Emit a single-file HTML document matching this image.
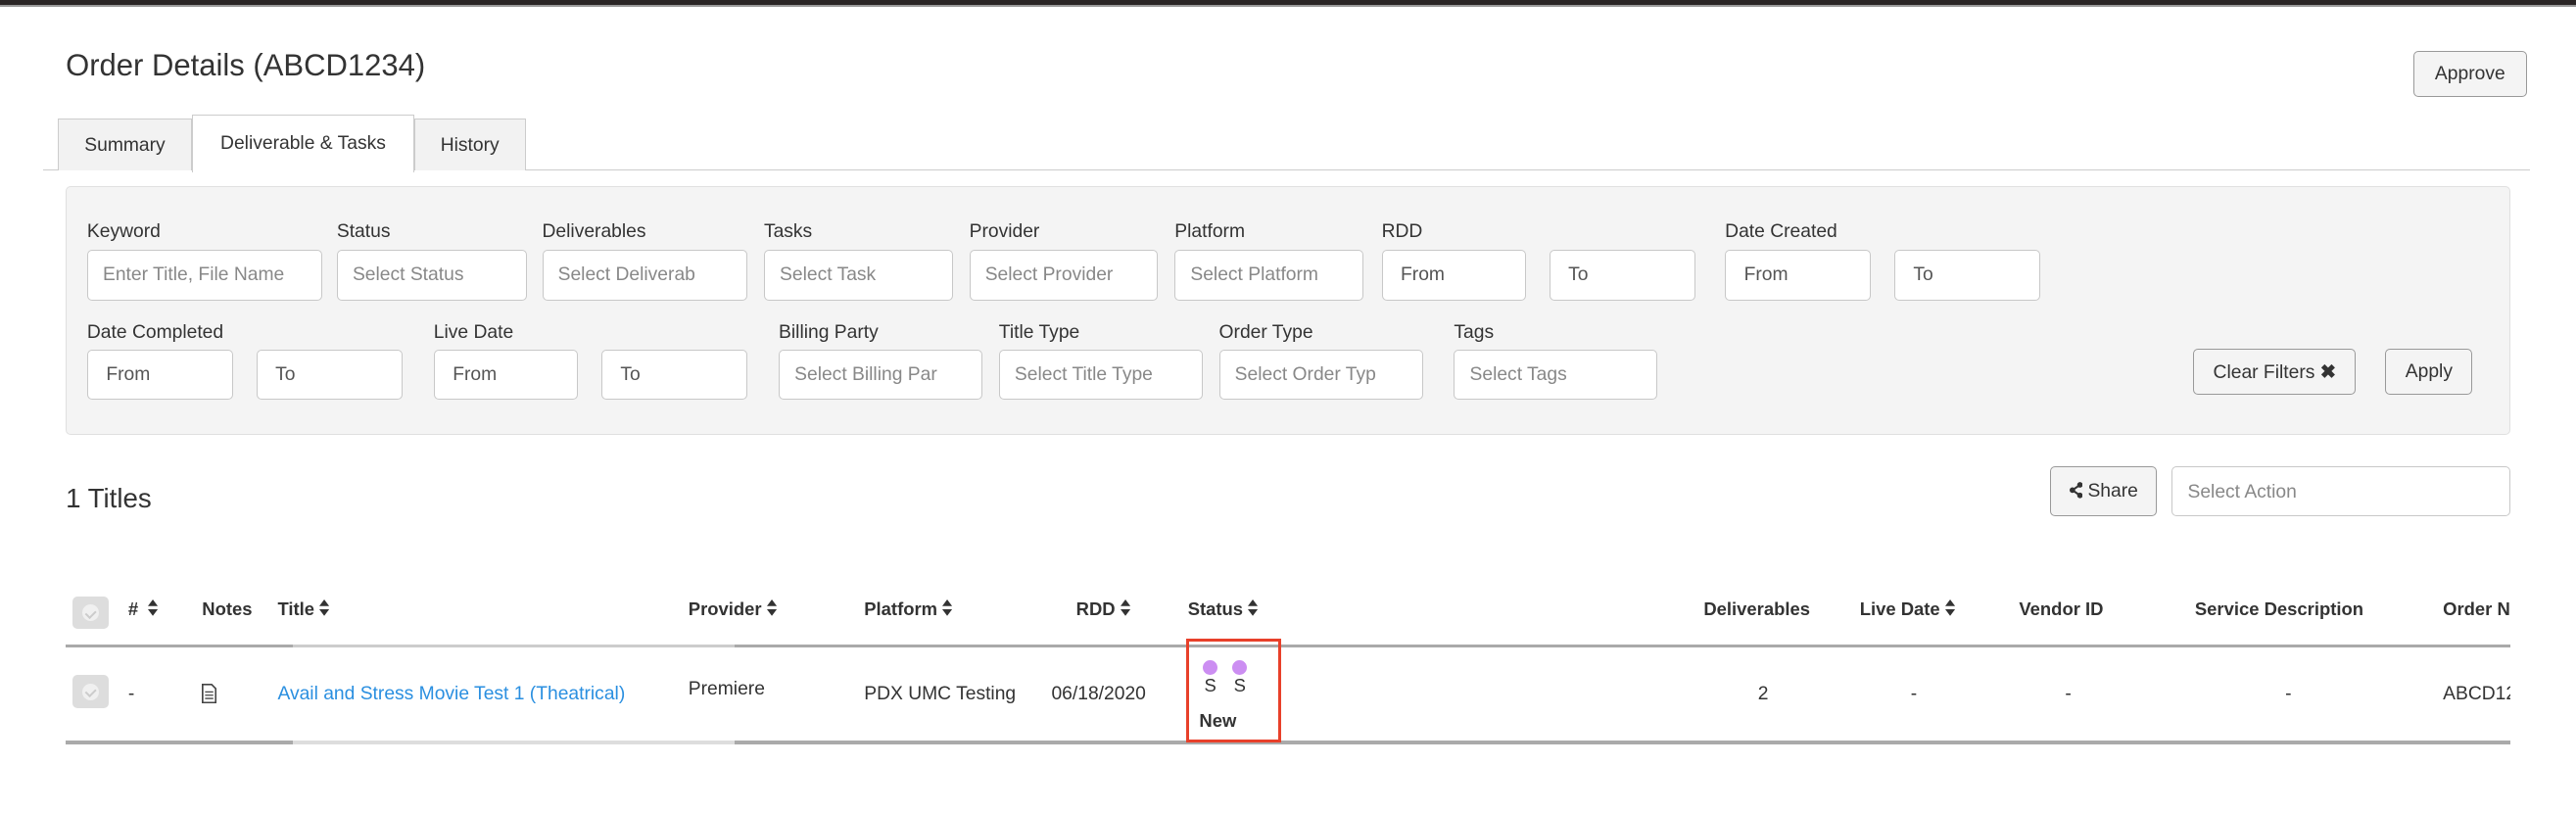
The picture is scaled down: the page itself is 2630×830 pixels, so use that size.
<!DOCTYPE html>
<html><head><meta charset="utf-8">
<style>
html,body{margin:0;padding:0;background:#fff;overflow:hidden}
body{width:2630px;height:830px}
#w{position:relative;width:1568px;height:495px;zoom:1.6773;font-family:"Liberation Sans",sans-serif;color:#333}
.a{position:absolute;white-space:nowrap}
.lbl{font-size:11.5px;color:#333}
.in{position:absolute;background:#fff;border:1px solid #c8c8c8;border-radius:3px;box-sizing:border-box;font-size:11.5px;color:#888;padding-left:9px;line-height:30px;overflow:hidden;white-space:nowrap}
.btn{position:absolute;background:#f4f4f4;border:1px solid #999;border-radius:3px;box-sizing:border-box;font-size:11.5px;color:#333;text-align:center}
.th{position:absolute;font-size:11px;font-weight:bold;color:#333;white-space:nowrap}
.td{position:absolute;font-size:11.5px;color:#333;white-space:nowrap}
.srt{display:inline-block;width:6px;height:10px;vertical-align:-1px;margin-left:3px}
.cb{position:absolute;width:22px;height:20px;background:#ddd;border-radius:3px}
.cb:after{content:"";position:absolute;left:6px;top:5px;width:10px;height:10px;border-radius:50%;background:#f0f0f0}
.cb:before{content:"";position:absolute;left:9px;top:7px;width:3px;height:5px;border:solid #ccc;border-width:0 1.5px 1.5px 0;transform:rotate(45deg);z-index:2}
</style></head><body><div id="w">
<div class="a" style="left:0;top:0;width:1568px;height:3px;background:#2a2525"></div>
<div class="a" style="left:0;top:3px;width:1568px;height:1px;background:#999"></div>

<div class="a" style="left:40px;top:29px;font-size:18.5px;color:#333">Order Details (ABCD1234)</div>
<div class="btn" style="left:1469px;top:31px;width:69px;height:28px;line-height:28px">Approve</div>

<div class="a" style="left:26px;top:103px;width:1514px;height:1px;background:#ccc"></div>
<div class="a" style="left:35px;top:72px;width:82px;height:32px;background:#f2f2f2;border:1px solid #ccc;border-bottom:none;box-sizing:border-box;font-size:11.5px;text-align:center;line-height:32px">Summary</div>
<div class="a" style="left:117px;top:70px;width:135px;height:35px;background:#fff;border:1px solid #ccc;border-bottom:none;box-sizing:border-box;font-size:11.5px;text-align:center;line-height:35px">Deliverable &amp; Tasks</div>
<div class="a" style="left:252px;top:72px;width:68px;height:32px;background:#f2f2f2;border:1px solid #ccc;border-bottom:none;box-sizing:border-box;font-size:11.5px;text-align:center;line-height:32px">History</div>

<div class="a" style="left:40px;top:113px;width:1488px;height:152px;background:#f4f4f4;border:1px solid #e0e0e0;border-radius:3px;box-sizing:border-box"></div>

<div class="a lbl" style="left:53px;top:135px">Keyword</div>
<div class="a lbl" style="left:205px;top:135px">Status</div>
<div class="a lbl" style="left:330px;top:135px">Deliverables</div>
<div class="a lbl" style="left:465px;top:135px">Tasks</div>
<div class="a lbl" style="left:590px;top:135px">Provider</div>
<div class="a lbl" style="left:715px;top:135px">Platform</div>
<div class="a lbl" style="left:841px;top:135px">RDD</div>
<div class="a lbl" style="left:1050px;top:135px">Date Created</div>
<div class="in" style="left:53px;top:152px;width:143px;height:31px">Enter Title, File Name</div>
<div class="in" style="left:205px;top:152px;width:116px;height:31px">Select Status</div>
<div class="in" style="left:330px;top:152px;width:125px;height:31px">Select Deliverab</div>
<div class="in" style="left:465px;top:152px;width:115px;height:31px">Select Task</div>
<div class="in" style="left:590px;top:152px;width:115px;height:31px">Select Provider</div>
<div class="in" style="left:715px;top:152px;width:115px;height:31px">Select Platform</div>
<div class="in" style="left:841px;top:152px;width:88px;height:31px;color:#555;padding-left:11px">From</div>
<div class="in" style="left:943px;top:152px;width:89px;height:31px;color:#555;padding-left:11px">To</div>
<div class="in" style="left:1050px;top:152px;width:89px;height:31px;color:#555;padding-left:11px">From</div>
<div class="in" style="left:1153px;top:152px;width:89px;height:31px;color:#555;padding-left:11px">To</div>

<div class="a lbl" style="left:53px;top:196px">Date Completed</div>
<div class="a lbl" style="left:264px;top:196px">Live Date</div>
<div class="a lbl" style="left:474px;top:196px">Billing Party</div>
<div class="a lbl" style="left:608px;top:196px">Title Type</div>
<div class="a lbl" style="left:742px;top:196px">Order Type</div>
<div class="a lbl" style="left:885px;top:196px">Tags</div>
<div class="in" style="left:53px;top:213px;width:89px;height:30px;color:#555;padding-left:11px">From</div>
<div class="in" style="left:156px;top:213px;width:89px;height:30px;color:#555;padding-left:11px">To</div>
<div class="in" style="left:264px;top:213px;width:88px;height:30px;color:#555;padding-left:11px">From</div>
<div class="in" style="left:366px;top:213px;width:89px;height:30px;color:#555;padding-left:11px">To</div>
<div class="in" style="left:474px;top:213px;width:124px;height:30px">Select Billing Par</div>
<div class="in" style="left:608px;top:213px;width:124px;height:30px">Select Title Type</div>
<div class="in" style="left:742px;top:213px;width:124px;height:30px">Select Order Typ</div>
<div class="in" style="left:885px;top:213px;width:124px;height:30px">Select Tags</div>
<div class="btn" style="left:1335px;top:212px;width:99px;height:28px;line-height:29px">Clear Filters <b>&#10006;</b></div>
<div class="btn" style="left:1452px;top:212px;width:53px;height:28px;line-height:27px">Apply</div>

<div class="a" style="left:40px;top:294px;font-size:16.5px">1 Titles</div>
<div class="btn" style="left:1248px;top:284px;width:65px;height:30px;line-height:30px"><svg width="8" height="10" viewBox="0 0 8 10" style="vertical-align:-1px"><circle cx="6.3" cy="1.8" r="1.7" fill="#333"/><circle cx="1.7" cy="5" r="1.7" fill="#333"/><circle cx="6.3" cy="8.2" r="1.7" fill="#333"/><path d="M6.3 1.8L1.7 5L6.3 8.2" stroke="#333" stroke-width="1.2" fill="none"/></svg> Share</div>
<div class="in" style="left:1322px;top:284px;width:206px;height:30px;line-height:31px">Select Action</div>

<svg width="0" height="0" style="position:absolute"><defs><symbol id="s" viewBox="0 0 6 10"><path d="M0 4L3 0L6 4Z M0 6L3 10L6 6Z" fill="#333"/></symbol></defs></svg>
<div class="cb" style="left:44px;top:363px"></div>
<div class="th" style="left:78px;top:364px"># <svg class="srt"><use href="#s"/></svg></div>
<div class="th" style="left:123px;top:364px">Notes</div>
<div class="th" style="left:169px;top:364px">Title<svg class="srt"><use href="#s"/></svg></div>
<div class="th" style="left:419px;top:364px">Provider<svg class="srt"><use href="#s"/></svg></div>
<div class="th" style="left:526px;top:364px">Platform<svg class="srt"><use href="#s"/></svg></div>
<div class="th" style="left:655px;top:364px">RDD<svg class="srt"><use href="#s"/></svg></div>
<div class="th" style="left:723px;top:364px">Status<svg class="srt"><use href="#s"/></svg></div>
<div class="th" style="left:1037px;top:364px">Deliverables</div>
<div class="th" style="left:1132px;top:364px">Live Date<svg class="srt"><use href="#s"/></svg></div>
<div class="th" style="left:1229px;top:364px">Vendor ID</div>
<div class="th" style="left:1336px;top:364px">Service Description</div>
<div class="th" style="left:1487px;top:364px;width:41px;overflow:hidden">Order No</div>

<div class="a" style="left:40px;top:392px;width:1488px;height:2px;background:#aaa"></div>
<div class="a" style="left:178px;top:392px;width:269px;height:2px;background:#ccc"></div>
<div class="a" style="left:40px;top:451px;width:1488px;height:2px;background:#aaa"></div>
<div class="a" style="left:178px;top:451px;width:269px;height:2px;background:#ddd"></div>

<div class="cb" style="left:44px;top:411px"></div>
<div class="td" style="left:78px;top:416px">-</div>
<svg class="a" style="left:123px;top:416px" width="9" height="12" viewBox="0 0 9 12"><path d="M0.5 0.5H6L8.5 3V11.5H0.5Z" fill="none" stroke="#444"/><path d="M2 5H7M2 7H7M2 9H7" stroke="#444" stroke-width="0.8"/></svg>
<div class="td" style="left:169px;top:416px;color:#2a8fe0">Avail and Stress Movie Test 1 (Theatrical)</div>
<div class="td" style="left:419px;top:413px">Premiere</div>
<div class="td" style="left:526px;top:416px">PDX UMC Testing</div>
<div class="td" style="left:640px;top:416px">06/18/2020</div>
<div class="a" style="left:722px;top:389px;width:58px;height:63px;border:2px solid #e8402a;box-sizing:border-box"></div>
<div class="a" style="left:732px;top:402px;width:9px;height:9px;border-radius:50%;background:#cc8ef2"></div>
<div class="a" style="left:750px;top:402px;width:9px;height:9px;border-radius:50%;background:#cc8ef2"></div>
<div class="td" style="left:733px;top:411px;font-size:11px">S</div>
<div class="td" style="left:751px;top:411px;font-size:11px">S</div>
<div class="td" style="left:730px;top:432px;font-weight:bold;font-size:11px">New</div>
<div class="td" style="left:1070px;top:416px">2</div>
<div class="td" style="left:1163px;top:416px">-</div>
<div class="td" style="left:1257px;top:416px">-</div>
<div class="td" style="left:1391px;top:416px">-</div>
<div class="td" style="left:1487px;top:416px;width:41px;overflow:hidden">ABCD1234</div>
</div></body></html>
